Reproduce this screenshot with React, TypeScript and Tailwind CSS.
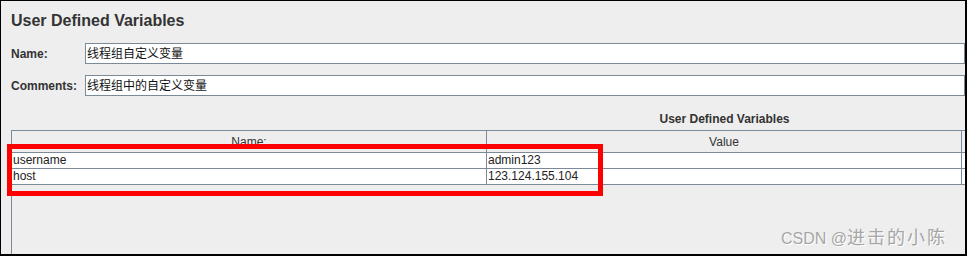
import React from "react";

const latin = "font-['Liberation_Sans',Arial,sans-serif]";
const cjk = "font-['Liberation_Sans','Noto_Sans_CJK_SC',sans-serif]";

const rows = [
  { name: "username", value: "admin123" },
  { name: "host", value: "123.124.155.104" },
];

function Field({ label, value }: { label: string; value: string }) {
  return (
    <div className="flex items-center h-[21px]">
      <div className={`w-[74px] shrink-0 text-[12px] font-bold text-[#333] ${latin}`}>
        {label}
      </div>
      <div
        className={`flex-1 h-full bg-white border border-[#7a8a99] pl-[1px] flex items-center text-[12px] leading-none text-[#111] ${cjk}`}
      >
        {value}
      </div>
    </div>
  );
}

export default function App() {
  return (
    <div className="relative w-[967px] h-[256px] overflow-hidden bg-[#eeeeee] border-l border-t border-r-2 border-b-2 border-black">
      <div className="pl-[10px] pt-[10px]">
        <h1 className={`text-[16px] leading-[20px] font-bold text-[#333] ${latin}`}>
          User Defined Variables
        </h1>

        <div className="mt-[12px] flex flex-col gap-[11px]">
          <Field label="Name:" value="线程组自定义变量" />
          <Field label="Comments:" value="线程组中的自定义变量" />
        </div>

        {/* table title, centred over the value column */}
        <div className="mt-[12px] flex h-[22px] items-center">
          <div className="w-[476px] shrink-0" />
          <div className={`w-[475px] text-center text-[12px] font-bold text-[#333] ${latin}`}>
            User Defined Variables
          </div>
        </div>

        {/* table */}
        <div className="h-[140px] border-l border-t border-[#7a8a99]">
          <div className={`flex h-[22px] border-b border-[#7a8a99] text-[12px] text-[#333] ${latin}`}>
            <div className="w-[475px] shrink-0 border-r border-[#7a8a99] flex items-center justify-center">
              Name:
            </div>
            <div className="w-[475px] shrink-0 border-r border-[#7a8a99] flex items-center justify-center">
              Value
            </div>
            <div className="flex-1" />
          </div>
          {rows.map((r) => (
            <div
              key={r.name}
              className={`flex h-[16px] bg-white border-b border-[#7a8a99] text-[12px] leading-[15px] text-[#222] ${latin}`}
            >
              <div className="w-[475px] shrink-0 border-r border-[#7a8a99] pl-[1px]">{r.name}</div>
              <div className="w-[475px] shrink-0 border-r border-[#7a8a99] pl-[1px]">{r.value}</div>
              <div className="flex-1" />
            </div>
          ))}
        </div>
      </div>

      {/* highlight box */}
      <div className="absolute left-[6px] top-[143px] w-[596px] h-[52px] border-[5px] border-[#ff0000]" />

      {/* watermark */}
      <div
        className={`absolute left-[780px] top-[226px] flex items-baseline text-[16px] leading-[22px] text-[#a6a6a6] [text-shadow:1px_1px_0_#ffffff] ${cjk}`}
      >
        <span>CSDN @</span>
        <span className="text-[18px] tracking-[2px]">进击的小陈</span>
      </div>
    </div>
  );
}
